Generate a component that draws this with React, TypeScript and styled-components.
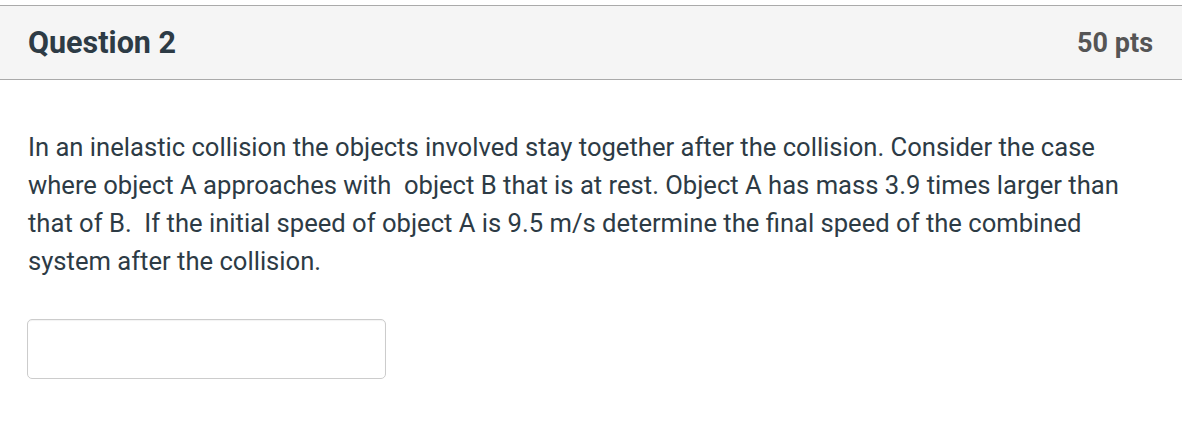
import * as React from 'react'
import styled, { createGlobalStyle } from 'styled-components'

const GlobalStyle = createGlobalStyle`
  html, body {
    margin: 0;
    padding: 0;
    background: #fff;
  }
  body {
    font-family: Roboto, "Liberation Sans", Arial, sans-serif;
    color: #2d3b45;
  }
`

const QuestionCard = styled.div`
  width: 1182px;
  padding-top: 5px;
`

const Header = styled.div`
  display: flex;
  align-items: center;
  justify-content: space-between;
  height: 73px;
  padding: 0 29px 0 28px;
  background: #f5f5f5;
  border-top: 1px solid #aaaaaa;
  border-bottom: 1px solid #aaaaaa;
`

const Title = styled.h2`
  margin: 0;
  font-size: 30.5px;
  font-weight: 700;
  color: #2d3b45;
`

const Points = styled.div`
  font-size: 27px;
  font-weight: 700;
  color: #555555;
`

const Body = styled.div`
  padding: 48px 28px 0;
`

const Text = styled.p`
  margin: 0;
  max-width: 1100px;
  font-size: 25.6px;
  line-height: 38px;
  color: #2d3b45;
`

const AnswerInput = styled.input`
  display: block;
  box-sizing: border-box;
  margin: 39px 0 0 -1px;
  width: 359px;
  height: 60px;
  border: 1px solid #cccccc;
  border-radius: 5px;
  box-shadow: inset 0 1px 1px rgba(0, 0, 0, 0.05);
  background: #fff;
  outline: none;
`

const App: React.FC = () => {
  return (
    <>
      <GlobalStyle />
      <QuestionCard>
        <Header>
          <Title>Question 2</Title>
          <Points>50 pts</Points>
        </Header>
        <Body>
          <Text>
            In an inelastic collision the objects involved stay together after the collision. Consider the case
            where object A approaches with&nbsp; object B that is at rest. Object A has mass 3.9 times larger than
            that of B.&nbsp; If the initial speed of object A is 9.5 m/s determine the final speed of the combined
            system after the collision.
          </Text>
          <AnswerInput type="text" />
        </Body>
      </QuestionCard>
    </>
  )
}

export default App
